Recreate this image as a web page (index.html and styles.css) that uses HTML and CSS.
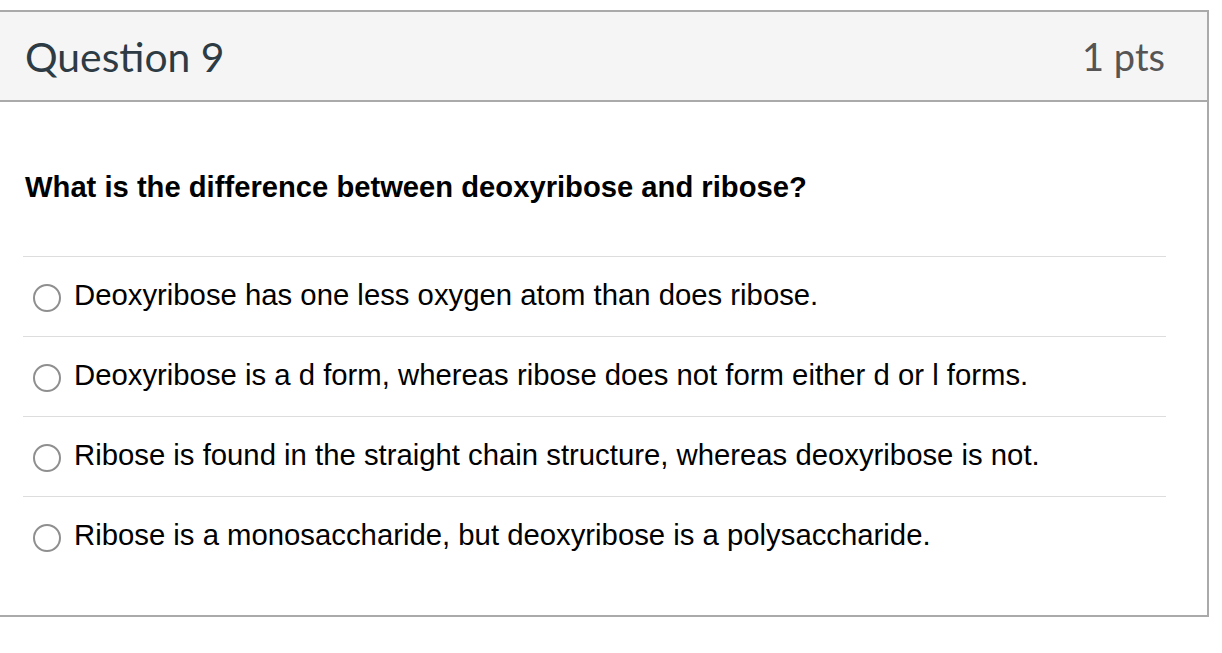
FILE: index.html
```html
<!DOCTYPE html>
<html>
<head>
<meta charset="utf-8">
<link rel="stylesheet" href="styles.css">
</head>
<body>
<div class="question">
  <div class="header">
    <span class="title">Question 9</span>
    <span class="pts">1 pts</span>
  </div>
  <div class="content">
    <div class="qtext">What is the difference between deoxyribose and ribose?</div>
    <div class="answers">
      <div class="answer"><span class="radio"></span><span class="label">Deoxyribose has one less oxygen atom than does ribose.</span></div>
      <div class="answer"><span class="radio"></span><span class="label">Deoxyribose is a d form, whereas ribose does not form either d or l forms.</span></div>
      <div class="answer"><span class="radio"></span><span class="label">Ribose is found in the straight chain structure, whereas deoxyribose is not.</span></div>
      <div class="answer"><span class="radio"></span><span class="label">Ribose is a monosaccharide, but deoxyribose is a polysaccharide.</span></div>
    </div>
  </div>
</div>
</body>
</html>
```

FILE: styles.css
```css
html, body {
  margin: 0;
  padding: 0;
  background: #fff;
}
.question {
  margin-top: 10px;
  width: 1207px;
  border-top: 2px solid #aaaaaa;
  border-right: 2px solid #aaaaaa;
  border-bottom: 2px solid #aaaaaa;
  box-sizing: content-box;
}
.header {
  height: 88px;
  background: #f5f5f5;
  border-bottom: 2px solid #aaaaaa;
  display: flex;
  align-items: center;
  justify-content: space-between;
  padding: 0 42px 0 25px;
  font-family: Lato, "Open Sans", sans-serif;
  font-size: 40.8px;
}
.title {
  color: #2d3b45;
}
.pts {
  color: #555555;
  font-size: 38px;
}
.content {
  padding: 0 41px 39px 23px;
}
.qtext {
  margin-top: 68px;
  margin-bottom: 52px;
  padding-left: 2px;
  font-family: "Liberation Sans", Arial, sans-serif;
  font-weight: bold;
  font-size: 29.2px;
  line-height: 34px;
  color: #000;
}
.answer {
  border-top: 1px solid #dddddd;
  height: 80px;
  box-sizing: border-box;
  padding-bottom: 3px;
  display: flex;
  align-items: center;
  font-family: "Liberation Sans", Arial, sans-serif;
  font-size: 29.3px;
  color: #000;
}
.radio {
  width: 24px;
  height: 24px;
  border: 2px solid #8f8f8f;
  border-radius: 50%;
  margin-left: 10px;
  margin-right: 13px;
  margin-top: 6px;
  flex: none;
}
```
